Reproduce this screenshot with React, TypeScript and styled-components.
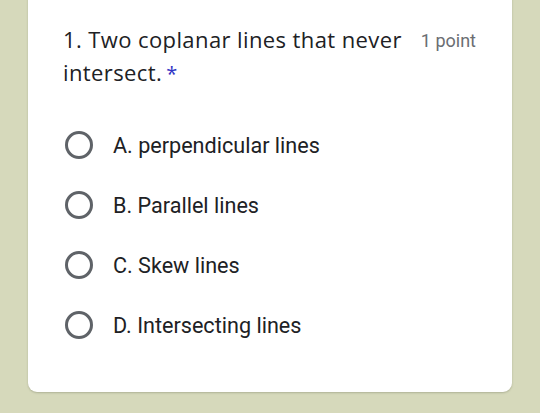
import React from "react";
import styled, { createGlobalStyle } from "styled-components";

const Global = createGlobalStyle`
  html, body { margin: 0; padding: 0; background: #d6d9bb; }
  body { width: 540px; height: 413px; overflow: hidden; }
`;

const Page = styled.div`
  padding: 0 28px;
  height: 413px;
  box-sizing: border-box;
`;

const Card = styled.div`
  background: #ffffff;
  margin-top: -12px;
  height: 404px;
  box-sizing: border-box;
  border-radius: 9px;
  box-shadow: 0 1px 2px rgba(60, 64, 40, 0.25);
  padding: 35px 36px 0 35px;
`;

const Header = styled.div`
  display: flex;
  justify-content: space-between;
  align-items: flex-start;
`;

const Title = styled.div`
  font-family: "Open Sans", "Roboto", sans-serif;
  font-size: 22px;
  line-height: 33px;
  color: #202124;
  width: 356px;
  letter-spacing: 0.4px;
`;

const Required = styled.span`
  color: #3034c4;
  margin-left: 4px;
  font-size: 20px;
  line-height: 1;
`;

const Points = styled.div`
  font-family: "Roboto", sans-serif;
  font-size: 18px;
  line-height: 33px;
  color: #6b6e72;
  white-space: nowrap;
  padding-top: 1px;
`;

const Options = styled.div`
  display: flex;
  flex-direction: column;
  margin-top: 26px;
  padding-left: 2px;
`;

const Option = styled.label`
  display: flex;
  align-items: center;
  height: 60px;
  gap: 20px;
`;

const Radio = styled.span`
  width: 28px;
  height: 28px;
  box-sizing: border-box;
  border: 3px solid #5f6368;
  border-radius: 50%;
  flex: none;
`;

const OptionText = styled.span`
  font-family: "Roboto", sans-serif;
  font-size: 21.6px;
  color: #202124;
`;

const options = [
  "A. perpendicular lines",
  "B. Parallel lines",
  "C. Skew lines",
  "D. Intersecting lines",
];

export default function App() {
  return (
    <>
      <Global />
      <Page>
        <Card>
          <Header>
            <Title>
              1. Two coplanar lines that never intersect.
              <Required>*</Required>
            </Title>
            <Points>1 point</Points>
          </Header>
          <Options>
            {options.map((o) => (
              <Option key={o}>
                <Radio />
                <OptionText>{o}</OptionText>
              </Option>
            ))}
          </Options>
        </Card>
      </Page>
    </>
  );
}
